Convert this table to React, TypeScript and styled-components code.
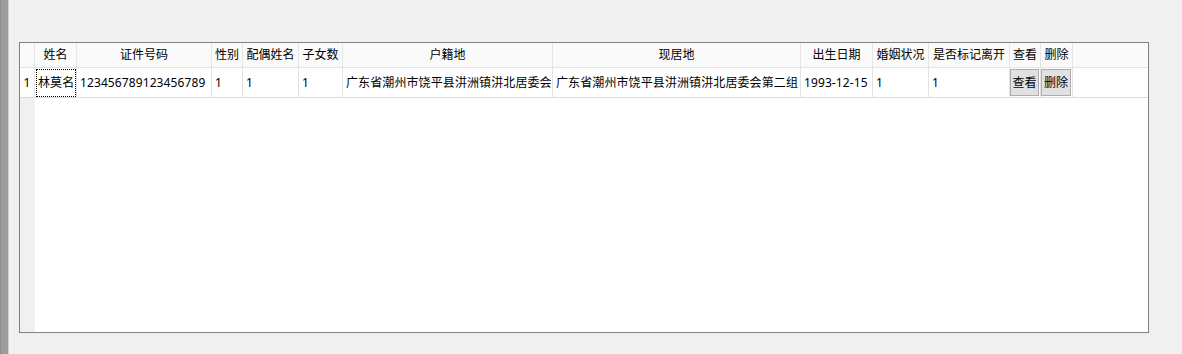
import { Fragment } from 'react';
import { createGlobalStyle, styled } from 'styled-components';

const GlobalStyle = createGlobalStyle`
  html, body {
    margin: 0;
    padding: 0;
    background: #f0f0f0;
  }
  body {
    font-family: 'Noto Sans', 'Noto Sans CJK SC', sans-serif;
    font-size: 12px;
    color: #000;
  }
`;

const COLUMNS = [
  { key: 'name', title: '姓名', width: 42 },
  { key: 'idNo', title: '证件号码', width: 135 },
  { key: 'gender', title: '性别', width: 31 },
  { key: 'spouse', title: '配偶姓名', width: 56 },
  { key: 'children', title: '子女数', width: 44 },
  { key: 'household', title: '户籍地', width: 210 },
  { key: 'residence', title: '现居地', width: 248 },
  { key: 'birthday', title: '出生日期', width: 72 },
  { key: 'marital', title: '婚姻状况', width: 56 },
  { key: 'left', title: '是否标记离开', width: 81 },
  { key: 'view', title: '查看', width: 31, button: true },
  { key: 'remove', title: '删除', width: 32, button: true },
];

const ROWS: Record<string, string>[] = [
  {
    name: '林莫名',
    idNo: '123456789123456789',
    gender: '1',
    spouse: '1',
    children: '1',
    household: '广东省潮州市饶平县汫洲镇汫北居委会',
    residence: '广东省潮州市饶平县汫洲镇汫北居委会第二组',
    birthday: '1993-12-15',
    marital: '1',
    left: '1',
    view: '查看',
    remove: '删除',
  },
];

const TEMPLATE = `15px ${COLUMNS.map((c) => `${c.width}px`).join(' ')} 1fr`;

const App = () => {
  return (
    <Page>
      <GlobalStyle />
      <SideStrip />
      <Content>
        <GridFrame $columns={TEMPLATE} $rows={ROWS.length}>
          <HeaderCell />
          {COLUMNS.map((col) => (
            <HeaderCell key={col.key}>{col.title}</HeaderCell>
          ))}
          <HeaderFiller />

          {ROWS.map((row, index) => (
            <Fragment key={index}>
              <RowHeader>{index + 1}</RowHeader>
              {COLUMNS.map((col, colIndex) =>
                col.button ? (
                  <ButtonCell key={col.key}>
                    <CellButton>{row[col.key]}</CellButton>
                  </ButtonCell>
                ) : (
                  <DataCell key={col.key} $focused={index === 0 && colIndex === 0}>
                    {row[col.key]}
                  </DataCell>
                ),
              )}
              <RowFiller />
            </Fragment>
          ))}

          <RowHeaderFill />
        </GridFrame>
      </Content>
    </Page>
  );
};

export default App;

const Page = styled.div`
  display: flex;
  width: 1182px;
  height: 354px;
  overflow: hidden;
`;

const SideStrip = styled.div`
  width: 7px;
  height: 100%;
  background: #9c9c9c;
  border-left: 1px solid #8c8c8c;
  border-right: 1px solid #d0d0d0;
`;

const Content = styled.div`
  flex: 1;
  padding: 42px 0 0 10px;
`;

const GridFrame = styled.div<{ $columns: string; $rows: number }>`
  display: grid;
  grid-template-columns: ${(p) => p.$columns};
  grid-template-rows: 25px repeat(${(p) => p.$rows}, 30px) 1fr;
  width: 1130px;
  height: 291px;
  box-sizing: border-box;
  border: 1px solid #828282;
  background: #fff;
`;

const HeaderCell = styled.div`
  display: flex;
  align-items: center;
  justify-content: center;
  background: #fafafa;
  border-right: 1px solid #e6e6e6;
  border-bottom: 1px solid #e2e4ea;
  white-space: nowrap;
  overflow: hidden;
  line-height: 16px;
`;

const HeaderFiller = styled.div`
  background: #fafafa;
  border-bottom: 1px solid #e2e4ea;
`;

const RowHeader = styled.div`
  display: flex;
  align-items: center;
  justify-content: center;
  background: #fdfdfd;
  border-right: 1px solid #e6e6e6;
  border-bottom: 1px solid #dcdcdc;
  line-height: 16px;
`;

const DataCell = styled.div<{ $focused?: boolean }>`
  display: flex;
  align-items: center;
  padding-left: 3px;
  border-right: 1px solid #e2e2e2;
  border-bottom: 1px solid #dcdcdc;
  white-space: nowrap;
  overflow: hidden;
  line-height: 16px;
  letter-spacing: 0.1px;
  outline: ${(p) => (p.$focused ? '1px dotted #000' : 'none')};
  outline-offset: -2px;
`;

const ButtonCell = styled.div`
  display: flex;
  padding: 1px 1px 1px 0;
  border-right: 1px solid #e2e2e2;
  border-bottom: 1px solid #dcdcdc;
`;

const CellButton = styled.button`
  flex: 1;
  margin: 0;
  padding: 0;
  font-family: inherit;
  font-size: 12px;
  line-height: 16px;
  color: #000;
  background: #e1e1e1;
  border: 1px solid #adadad;
  border-radius: 0;
`;

const RowFiller = styled.div`
  border-bottom: 1px solid #dcdcdc;
`;

const RowHeaderFill = styled.div`
  grid-column: 1;
  background: #f0f0f0;
`;
